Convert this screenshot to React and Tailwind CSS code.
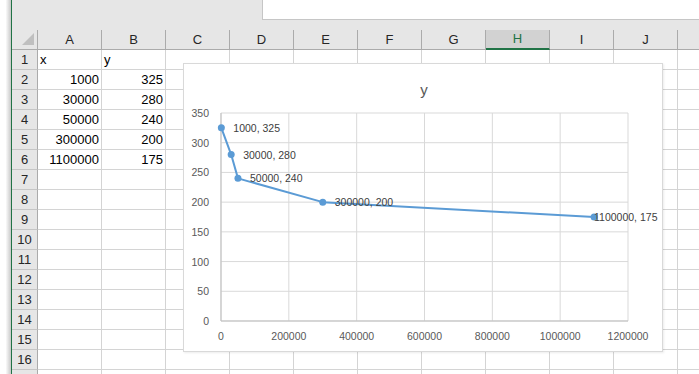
import React from "react";

const cols = ["A", "B", "C", "D", "E", "F", "G", "H", "I", "J", "K"];

const data = [
    ["x", "y"],
    [1000, 325],
    [30000, 280],
    [50000, 240],
    [300000, 200],
    [1100000, 175],
];

const ROWS = 17;

// chart plot area (chart coords)
const PL = 37, PT = 49, PR = 444, PB = 257;
const px = (x) => PL + (x / 1200000) * (PR - PL);
const py = (y) => PB - (y / 350) * (PB - PT);

const Chart = () => {
    const pts = data.slice(1).map(([x, y]) => ({ x, y, cx: px(x), cy: py(y) }));
    const yTicks = [0, 50, 100, 150, 200, 250, 300, 350];
    const xTicks = [0, 200000, 400000, 600000, 800000, 1000000, 1200000];

    return (
        <div className="absolute left-[183px] top-[63px] w-[480px] h-[289px] bg-white border border-[#d9d9d9] shadow-[1px_1px_2px_rgba(0,0,0,0.08)]">
            <svg width="478" height="287" className="block">
                <text x="240" y="31" textAnchor="middle" fontSize="15" fill="#595959" fontFamily="Liberation Sans, sans-serif">y</text>

                {yTicks.map((t) => (
                    <g key={t}>
                        <line x1={PL} x2={PR} y1={py(t)} y2={py(t)} stroke="#d9d9d9" strokeWidth="1" />
                        <text x="25" y={py(t) + 4} textAnchor="end" fontSize="10.5" fill="#595959" fontFamily="Liberation Sans, sans-serif">{t}</text>
                    </g>
                ))}
                {xTicks.map((t) => (
                    <g key={t}>
                        <line x1={px(t)} x2={px(t)} y1={PT} y2={PB} stroke="#d9d9d9" strokeWidth="1" />
                        <text x={px(t)} y="276" textAnchor="middle" fontSize="10.5" fill="#595959" fontFamily="Liberation Sans, sans-serif">{t}</text>
                    </g>
                ))}
                <line x1={PL} x2={PL} y1={PT} y2={PB} stroke="#bfbfbf" />
                <line x1={PL} x2={PR} y1={PB} y2={PB} stroke="#bfbfbf" />

                <polyline
                    points={pts.map((p) => `${p.cx},${p.cy}`).join(" ")}
                    fill="none"
                    stroke="#5b9bd5"
                    strokeWidth="2"
                    strokeLinejoin="round"
                />
                {pts.map((p) => (
                    <circle key={p.x} cx={p.cx} cy={p.cy} r="3.5" fill="#5b9bd5" />
                ))}
                {pts.map((p, i) => (
                    <text
                        key={"l" + p.x}
                        x={i === pts.length - 1 ? 410 : p.cx + 12}
                        y={p.cy + 4}
                        fontSize="10.5"
                        fill="#404040"
                        fontFamily="Liberation Sans, sans-serif"
                    >
                        {p.x}, {p.y}
                    </text>
                ))}
            </svg>
        </div>
    );
};

export default function App() {
    return (
        <div className="relative w-[699px] h-[374px] overflow-hidden flex bg-white font-['Liberation_Sans',sans-serif] text-[13px]">
            {/* left edge */}
            <div className="w-[11px] shrink-0 h-full bg-gradient-to-r from-white via-white to-[#c8c8c8] border-r border-[#217346] box-content" />

            <div className="flex-1 min-w-0 overflow-hidden flex flex-col">
                {/* top bar */}
                <div className="h-[30px] shrink-0 bg-[#e6e6e6] flex">
                    <div className="ml-auto w-[437px] h-[20px] bg-white border-l border-b border-[#c6c6c6]" />
                </div>

                {/* column headers */}
                <div className="flex h-[20px] shrink-0 bg-[#e6e6e6]">
                    <div className="w-[26px] shrink-0 h-full border-r border-b border-[#ababab] relative">
                        <div className="absolute right-[3px] bottom-[4px] w-0 h-0 border-l-[12px] border-l-transparent border-b-[12px] border-b-[#bfbfbf]" />
                    </div>
                    {cols.map((c) => (
                        <div
                            key={c}
                            className={
                                c === "H"
                                    ? "w-[64px] shrink-0 h-full flex items-center justify-center bg-[#d2d2d2] border-r border-[#ababab] border-b-2 border-b-[#217346] text-[#217346]"
                                    : "w-[64px] shrink-0 h-full flex items-center justify-center border-r border-b border-[#ababab] text-[#262626]"
                            }
                        >
                            {c}
                        </div>
                    ))}
                </div>

                {/* rows */}
                {Array.from({ length: ROWS }).map((_, r) => (
                    <div key={r} className="flex h-[20px] shrink-0">
                        <div className="w-[26px] shrink-0 h-full bg-[#e6e6e6] border-r border-[#ababab] border-b border-b-[#c6c6c6] flex items-center justify-center text-[#262626]">
                            {r + 1}
                        </div>
                        {cols.map((c, ci) => {
                            const v = data[r] ? data[r][ci] : undefined;
                            const num = typeof v === "number";
                            return (
                                <div
                                    key={c}
                                    className={`w-[64px] shrink-0 h-full border-r border-b border-[#d4d4d4] flex items-center px-[2px] text-black ${num ? "justify-end" : "justify-start"}`}
                                >
                                    {v}
                                </div>
                            );
                        })}
                    </div>
                ))}
            </div>

            <Chart />
        </div>
    );
}
